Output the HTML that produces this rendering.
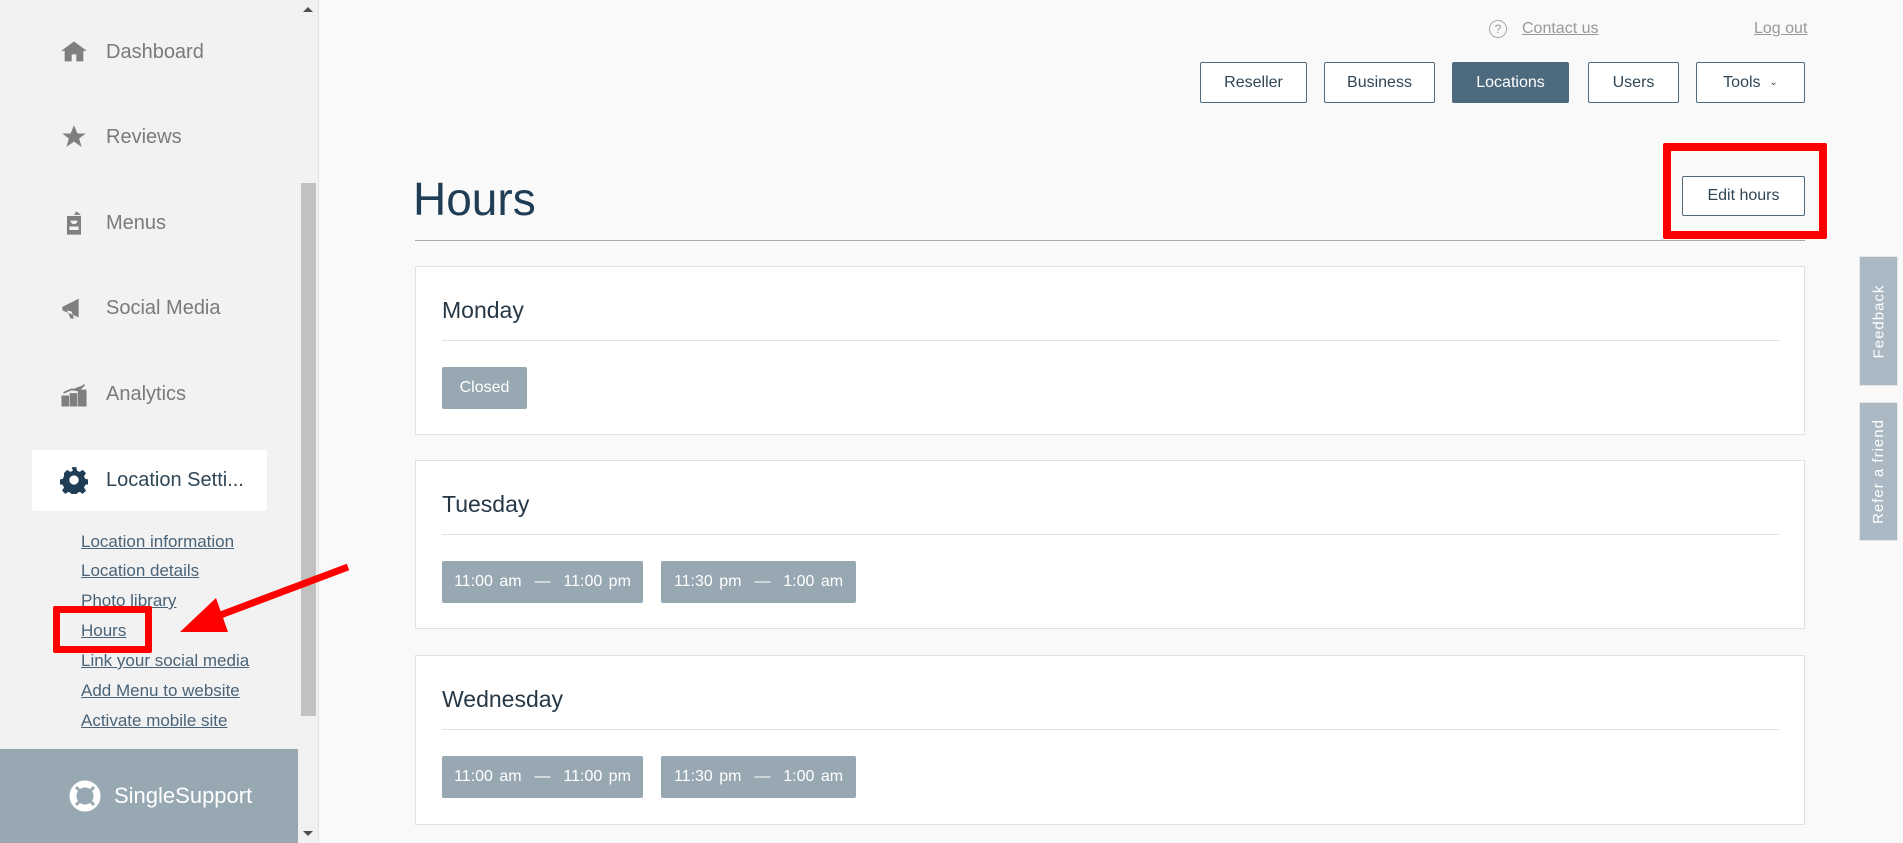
<!DOCTYPE html>
<html><head><meta charset="utf-8"><style>
*{box-sizing:border-box;margin:0;padding:0}
body{width:1903px;height:843px;overflow:hidden;background:#f9f9f9;font-family:"Liberation Sans",sans-serif;position:relative}
.abs{position:absolute}
#side{left:0;top:0;width:319px;height:843px;background:#f2f2f2;border-right:1px solid #e2e2e2}
.nav{position:absolute;left:60px;height:30px;display:flex;align-items:center;color:#7a7a7a;font-size:20px}
.nav svg{width:28px;height:28px;margin-right:18px;fill:#7f7f7f}
.sub{position:absolute;left:81px;font-size:17px;color:#4a6378;text-decoration:underline}
.btn{position:absolute;top:62px;height:41px;border:1px solid #4d6a7e;border-radius:2px;background:#fff;color:#2f4656;font-size:16px;display:flex;align-items:center;justify-content:center}
.card{position:absolute;left:415px;width:1390px;background:#fff;border:1px solid #e0e0e0}
.day{position:absolute;left:26px;top:30px;font-size:23px;color:#263746}
.ihr{position:absolute;left:26px;right:25px;top:73px;border-top:1px solid #e2e2e2}
.pill{position:absolute;top:100px;height:42px;background:#97a8b3;border-radius:2px;color:#fff;font-size:16px;display:flex;align-items:center;justify-content:center;word-spacing:2px}
.tab{position:absolute;left:1859px;width:39px;background:#aab9c3;border:1px solid #e6e6e6;color:#fff;font-size:15px;display:flex;align-items:center;justify-content:center}
.tab span{transform:rotate(-90deg);white-space:nowrap;letter-spacing:1px}
</style></head><body>
<div id="side" class="abs">
 <div class="nav" style="top:37px"><svg viewBox="0 0 24 24"><path d="M12 3L1 11h3v9h6v-6h4v6h6v-9h3z"/></svg>Dashboard</div>
 <div class="nav" style="top:122px"><svg viewBox="0 0 24 24"><path d="M12 2l3 7h7l-5.6 4.3 2.1 7.2L12 16l-6.5 4.5 2.1-7.2L2 9h7z"/></svg>Reviews</div>
 <div class="nav" style="top:208px"><svg viewBox="0 0 24 24"><path d="M6 6h12v16H6z M8 15h8v3H8z M9 10a3 3 0 006 0z" fill-rule="evenodd"/><path d="M14 2l4 3h-6z"/></svg>Menus</div>
 <div class="nav" style="top:293px"><svg viewBox="0 0 24 24"><path d="M2 11l14-7v16L2 14z M6 14l3 7h3l-2-6z"/></svg>Social Media</div>
 <div class="nav" style="top:379px"><svg viewBox="0 0 24 24"><path d="M2 14h5v8H2z M9 12h5v10H9z M16 9h6v13h-6z M3 11l7-3 6 1 5-5" stroke="#7f7f7f" stroke-width="1.5"/></svg>Analytics</div>
 <div class="abs" style="left:32px;top:450px;width:235px;height:61px;background:#fff;border-radius:3px"></div>
 <div class="nav" style="top:465px;color:#2f4656"><svg viewBox="0 0 24 24" style="fill:#1f3d55"><path d="M10 1h4l.6 3 2.3 1 2.6-1.7 2.8 2.8-1.7 2.6 1 2.3 3 .6v4l-3 .6-1 2.3 1.7 2.6-2.8 2.8-2.6-1.7-2.3 1-.6 3h-4l-.6-3-2.3-1-2.6 1.7-2.8-2.8 1.7-2.6-1-2.3-3-.6v-4l3-.6 1-2.3L3.4 6.1 6.2 3.3 8.8 5l2.3-1z M12 8a4 4 0 100 8 4 4 0 000-8z" fill-rule="evenodd"/></svg>Location Setti...</div>
 <div class="sub" style="top:532px">Location information</div>
 <div class="sub" style="top:561px">Location details</div>
 <div class="sub" style="top:591px">Photo library</div>
 <div class="sub" style="top:621px">Hours</div>
 <div class="sub" style="top:651px">Link your social media</div>
 <div class="sub" style="top:681px">Add Menu to website</div>
 <div class="sub" style="top:711px">Activate mobile site</div>
 <div class="abs" style="left:299px;top:0;width:19px;height:843px;background:#f1f1f1"></div>
 <div class="abs" style="left:301px;top:183px;width:15px;height:533px;background:#c1c1c1"></div>
 <div class="abs" style="left:303px;top:7px;border:5px solid transparent;border-bottom-color:#505050;border-top:0"></div>
 <div class="abs" style="left:303px;top:831px;border:5px solid transparent;border-top-color:#505050;border-bottom:0"></div>
 <div class="abs" style="left:0;top:749px;width:298px;height:94px;background:#97a8b3;display:flex;align-items:center;color:#fff;font-size:22px">
  <svg width="34" height="34" viewBox="0 0 34 34" style="margin-left:68px;margin-right:12px"><circle cx="17" cy="17" r="12" fill="none" stroke="#fff" stroke-width="7"/><g stroke="#97a8b3" stroke-width="3"><path d="M8 8l5 5M26 8l-5 5M8 26l5-5M26 26l-5-5"/></g></svg>SingleSupport</div>
</div>
<div class="abs" style="left:1489px;top:20px;width:18px;height:18px;border:1px solid #aaa;border-radius:50%;color:#999;font-size:12px;text-align:center;line-height:16px">?</div>
<div class="abs" style="left:1522px;top:20px;color:#999;font-size:16px;text-decoration:underline">Contact us</div>
<div class="abs" style="left:1754px;top:20px;color:#999;font-size:16px;text-decoration:underline">Log out</div>
<div class="btn" style="left:1200px;width:107px">Reseller</div>
<div class="btn" style="left:1324px;width:111px">Business</div>
<div class="btn" style="left:1452px;width:117px;background:#4d6a7e;color:#fff">Locations</div>
<div class="btn" style="left:1588px;width:91px">Users</div>
<div class="btn" style="left:1696px;width:109px">Tools &nbsp;<span style="font-size:10px">&#8964;</span></div>
<div class="abs" style="left:413px;top:172px;font-size:46px;color:#1f3d55">Hours</div>
<div class="abs" style="left:415px;top:240px;width:1390px;border-top:1px solid #a9a9a9"></div>
<div class="btn" style="left:1682px;top:176px;width:123px;height:40px">Edit hours</div>
<div class="abs" style="left:1663px;top:143px;width:164px;height:96px;border:8px solid #f00;border-radius:2px"></div>
<div class="card" style="top:266px;height:169px"><div class="day">Monday</div><div class="ihr"></div><div class="pill" style="left:26px;width:85px">Closed</div></div>
<div class="card" style="top:460px;height:169px"><div class="day">Tuesday</div><div class="ihr"></div><div class="pill" style="left:26px;width:201px">11:00 am &nbsp;— &nbsp;11:00 pm</div><div class="pill" style="left:245px;width:195px">11:30 pm &nbsp;— &nbsp;1:00 am</div></div>
<div class="card" style="top:655px;height:170px"><div class="day">Wednesday</div><div class="ihr"></div><div class="pill" style="left:26px;width:201px">11:00 am &nbsp;— &nbsp;11:00 pm</div><div class="pill" style="left:245px;width:195px">11:30 pm &nbsp;— &nbsp;1:00 am</div></div>
<div class="tab" style="top:256px;height:130px"><span>Feedback</span></div>
<div class="tab" style="top:402px;height:139px"><span>Refer a friend</span></div>
<div class="abs" style="left:53px;top:606px;width:99px;height:47px;border:7px solid #f00;border-radius:2px"></div>
<svg class="abs" style="left:0;top:0" width="1903" height="843"><line x1="348" y1="567" x2="210" y2="619" stroke="#f00" stroke-width="7"/><polygon points="180,632 216,598 228,632" fill="#f00"/></svg>
</body></html>
